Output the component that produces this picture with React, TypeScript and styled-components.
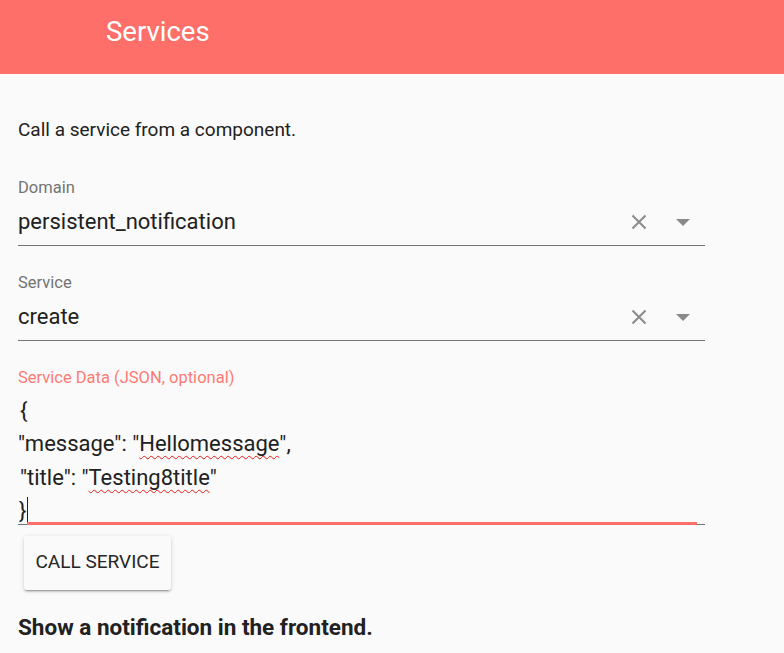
import React from "react";
import styled, { createGlobalStyle } from "styled-components";

const Global = createGlobalStyle`
  html, body { margin: 0; padding: 0; background: #fafafa; }
  body { font-family: Roboto, "Noto Sans", sans-serif; color: #212121; -webkit-font-smoothing: antialiased; }
`;

const Page = styled.div`
  width: 784px;
  min-height: 653px;
  background: #fafafa;
  overflow: hidden;
`;

const Header = styled.header`
  height: 74px;
  background: #ff6f69;
  display: flex;
  align-items: center;
  padding-left: 106px;
  box-sizing: border-box;
`;

const Title = styled.h1`
  margin: 0 0 10px 0;
  font-size: 27.5px;
  font-weight: 400;
  color: #ffffff;
  line-height: 32px;
`;

const Content = styled.main`
  padding: 46px 0 0 18px;
  display: flex;
  flex-direction: column;
`;

const Intro = styled.p`
  margin: 0;
  font-size: 19px;
  line-height: 20px;
  color: #212121;
`;

const Field = styled.div<{ $gap: number }>`
  width: 687px;
  margin-top: ${(p) => p.$gap}px;
  display: flex;
  flex-direction: column;
`;

const Label = styled.label<{ $focused?: boolean }>`
  font-size: 16.5px;
  line-height: 20px;
  color: ${(p) => (p.$focused ? "#ff7a74" : "#737373")};
`;

const ValueRow = styled.div`
  display: flex;
  align-items: center;
  padding: 9px 0 8px 0;
  border-bottom: 1px solid #757575;
`;

const Value = styled.div`
  flex: 1;
  font-size: 22px;
  line-height: 30px;
  color: #212121;
`;

const IconButton = styled.span<{ $w: number }>`
  width: ${(p) => p.$w}px;
  display: flex;
  align-items: center;
  justify-content: center;
  height: 30px;
`;

const Lines = styled.div`
  padding-top: 6px;
  margin-bottom: -4px;
  font-size: 22px;
  line-height: 33.3px;
  color: #212121;
  white-space: pre;
`;

const Line = styled.div<{ $indent?: number }>`
  padding-left: ${(p) => p.$indent ?? 0}px;
`;

const Misspelled = styled.span`
  text-decoration: underline wavy #e81a1a;
  text-decoration-thickness: 1px;
  text-underline-offset: 4px;
  text-decoration-skip-ink: none;
`;

const Caret = styled.span`
  display: inline-block;
  width: 1px;
  height: 27px;
  background: #212121;
  vertical-align: -6px;
  margin-left: 1px;
`;

const Underline = styled.div`
  position: relative;
  height: 2px;
  border-bottom: 1px solid #757575;
  box-sizing: border-box;
`;

const FocusBar = styled.div`
  position: absolute;
  left: 9px;
  width: 670px;
  top: -1px;
  height: 3px;
  background: #ff6f69;
`;

const Button = styled.button`
  margin: 11px 0 0 6px;
  width: 147px;
  height: 54px;
  border: none;
  border-radius: 3px;
  background: #fafafa;
  color: #262626;
  font-family: Roboto, "Noto Sans", sans-serif;
  font-size: 19px;
  box-shadow: 0 2px 2px rgba(0, 0, 0, 0.14), 0 1px 5px rgba(0, 0, 0, 0.12),
    0 3px 1px -2px rgba(0, 0, 0, 0.2);
  cursor: pointer;
  padding: 0 0 3px 0;
  align-self: flex-start;
`;

const Description = styled.p`
  margin: 23px 0 0 0;
  font-size: 22.5px;
  font-weight: 700;
  line-height: 28px;
  color: #212121;
`;

const ClearIcon = () => (
  <svg width="16" height="16" viewBox="0 0 16 16">
    <path d="M1.5 1.5 L14.5 14.5 M14.5 1.5 L1.5 14.5" stroke="#8a8a8a" strokeWidth="2" />
  </svg>
);

const ArrowIcon = () => (
  <svg width="14" height="7" viewBox="0 0 14 7">
    <path d="M0 0 L14 0 L7 7 Z" fill="#8a8a8a" />
  </svg>
);

const SelectField = ({ label, value, gap }: { label: string; value: string; gap: number }) => (
  <Field $gap={gap}>
    <Label>{label}</Label>
    <ValueRow>
      <Value>{value}</Value>
      <IconButton $w={44}>
        <ClearIcon />
      </IconButton>
      <IconButton $w={44}>
        <ArrowIcon />
      </IconButton>
    </ValueRow>
  </Field>
);

export default function App() {
  return (
    <Page>
      <Global />
      <Header>
        <Title>Services</Title>
      </Header>
      <Content>
        <Intro>Call a service from a component.</Intro>
        <SelectField label="Domain" value="persistent_notification" gap={38} />
        <SelectField label="Service" value="create" gap={27} />
        <Field $gap={27}>
          <Label $focused>Service Data (JSON, optional)</Label>
          <Lines>
            <Line $indent={2}>{"{"}</Line>
            <Line>
              "message": "<Misspelled>Hellomessage</Misspelled>",
            </Line>
            <Line $indent={2}>
              "title": "<Misspelled>Testing8title</Misspelled>"
            </Line>
            <Line $indent={1}>
              {"}"}
              <Caret />
            </Line>
          </Lines>
          <Underline>
            <FocusBar />
          </Underline>
        </Field>
        <Button>CALL SERVICE</Button>
        <Description>Show a notification in the frontend.</Description>
      </Content>
    </Page>
  );
}
